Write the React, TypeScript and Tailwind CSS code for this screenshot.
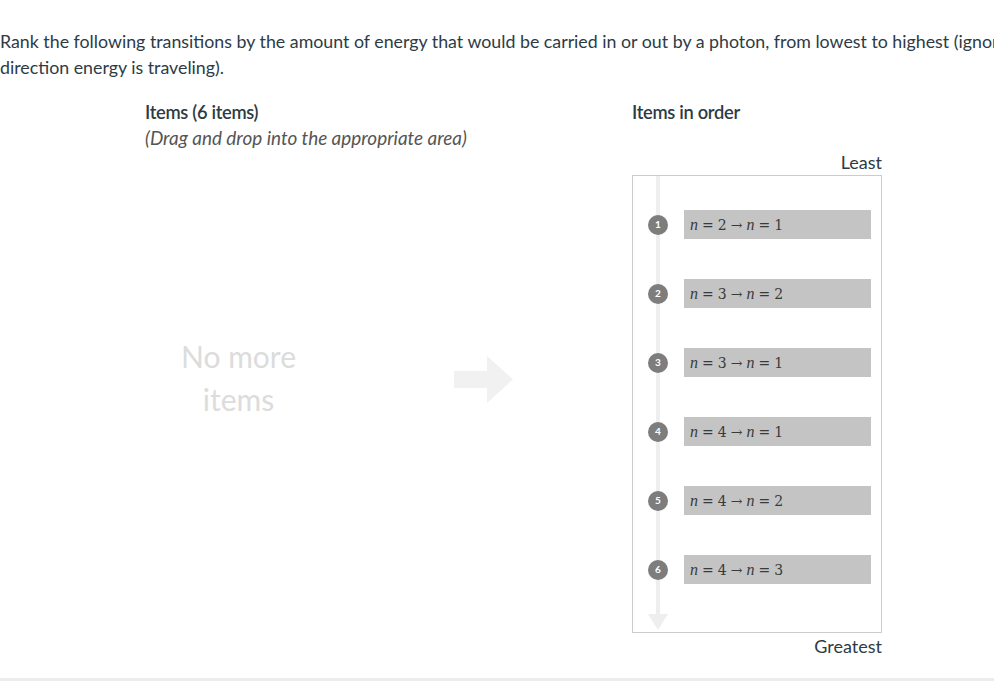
import React from "react";

const items: [string, string][] = [
  ["2", "1"],
  ["3", "2"],
  ["3", "1"],
  ["4", "1"],
  ["4", "2"],
  ["4", "3"],
];

function MathExpr({ a, b }: { a: string; b: string }) {
  return (
    <span className="font-['DejaVu_Serif',serif] text-[14px] text-[#3a3a3a] whitespace-nowrap">
      <i className="font-['Liberation_Serif',serif] text-[16px]">n</i>
      <span className="mx-[4px]">=</span>
      <span>{a}</span>
      <span className="mx-[4px]">→</span>
      <i className="font-['Liberation_Serif',serif] text-[16px]">n</i>
      <span className="mx-[4px]">=</span>
      <span>{b}</span>
    </span>
  );
}

export default function App() {
  return (
    <div className="w-[994px] h-[693px] overflow-hidden bg-white font-['Lato','Open_Sans',sans-serif] text-[#2d3b45]">
      <div className="w-[1040px] pt-[28px] text-[17.8px] leading-[26px]">
        Rank the following transitions by the amount of energy that would be carried in or out by a photon, from lowest to highest (ignore the direction energy is traveling).
      </div>
      <div className="flex pl-[145px] mt-[20px]">
        <div className="w-[187px] flex flex-col">
          <div className="text-[18.3px] leading-[25px] font-semibold tracking-[-0.3px] whitespace-nowrap">Items (6 items)</div>
          <div className="text-[18.9px] leading-[26px] italic text-[#555] whitespace-nowrap">(Drag and drop into the appropriate area)</div>
          <div className="mt-[184px] text-center text-[30px] leading-[43px] text-[#dcdcdc]">
            No more
            <br />
            items
          </div>
        </div>
        <div className="w-[300px] flex">
          <div className="ml-[122px] mt-[256px]">
            <svg width="59" height="47" viewBox="0 0 59 47">
              <polygon points="0,15 33,15 33,0 59,23.5 33,47 33,32 0,32" fill="#f1f1f1" />
            </svg>
          </div>
        </div>
        <div className="w-[250px] flex flex-col">
          <div className="text-[18.3px] leading-[25px] font-semibold tracking-[-0.3px]">Items in order</div>
          <div className="mt-[25px] text-right text-[18px] leading-[24px]">Least</div>
          <div className="relative mt-[1px] h-[458px] border border-[#cccccc] pt-[34px]">
            <div className="absolute left-[23px] top-0 w-[4px] h-[440px] bg-[#eeeeee]" />
            <svg className="absolute left-[15px] top-[438px]" width="20" height="16" viewBox="0 0 20 16">
              <polygon points="0,0 20,0 10,16" fill="#eeeeee" />
            </svg>
            <div className="relative flex flex-col gap-[40px]">
              {items.map(([a, b], i) => (
                <div key={i} className="flex items-center">
                  <div className="ml-[15px] w-[20px] h-[20px] rounded-full bg-[#7d7d7d] text-white text-[10px] font-bold flex items-center justify-center">
                    {i + 1}
                  </div>
                  <div className="ml-[16px] w-[187px] h-[29px] bg-[#c4c4c4] flex items-center pl-[6px]">
                    <MathExpr a={a} b={b} />
                  </div>
                </div>
              ))}
            </div>
          </div>
          <div className="text-right text-[18px] leading-[24px] mt-[1px]">Greatest</div>
        </div>
      </div>
      <div className="mt-[20px] h-[3px] bg-[#ececec]" />
    </div>
  );
}
